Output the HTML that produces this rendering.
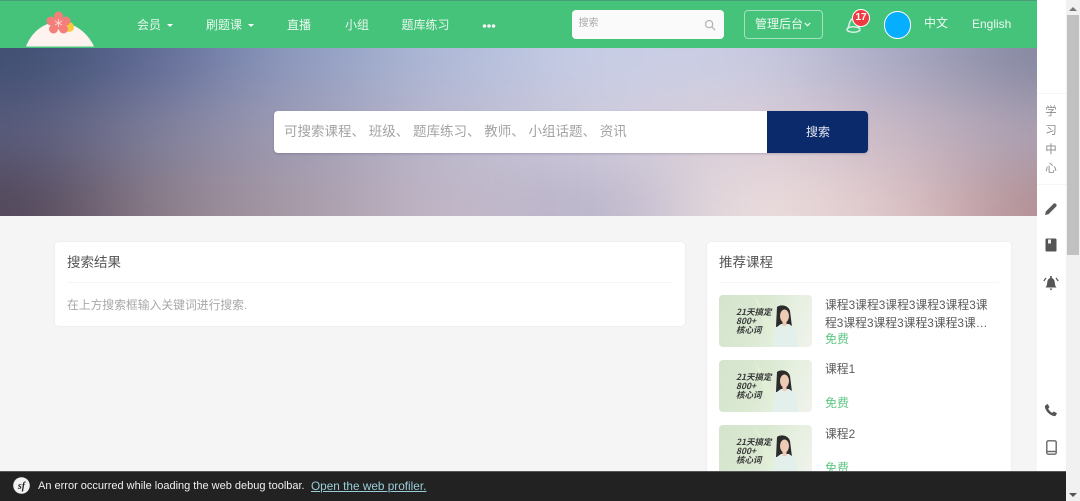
<!DOCTYPE html>
<html lang="zh">
<head>
<meta charset="utf-8">
<title>搜索</title>
<style>
*{box-sizing:border-box;margin:0;padding:0}
html,body{width:1080px;height:501px;overflow:hidden;background:#f5f5f5;font-family:"Liberation Sans","Noto Sans CJK SC",sans-serif}
.a{position:absolute;white-space:nowrap}
#nav{left:0;top:0;width:1037px;height:48px;background:#46c37b;border-top:1px solid #4a9d78}
.n{top:16px;font-size:12px;line-height:18px;color:#e8f7ee}
.caret{display:inline-block;width:0;height:0;border-left:3px solid transparent;border-right:3px solid transparent;border-top:3.500px solid #fff;margin-left:6px;vertical-align:2px}
#hero{left:0;top:48px;width:1037px;height:168px;overflow:hidden;background:#a8a8c4}
.card{background:#fff;border-radius:4px;box-shadow:0 0 2px rgba(0,0,0,.06)}
.t{font-size:13.500px;line-height:20px;color:#555}
.thumb{left:719px;width:93px;height:52px;border-radius:4px;overflow:hidden;background:linear-gradient(115deg,#d4e4cd 0,#dbe9d2 45%,#e6efe0 68%,#f0f3ec 100%)}
.thumb text{font-family:"Noto Sans CJK SC",sans-serif;font-size:8.500px;font-weight:700;font-style:italic;fill:#3a3a3a}
.price{left:825px;font-size:12px;line-height:18px;color:#5fc784}
.ct{left:825px;font-size:11.800px;line-height:18px;color:#5a5a5a}
</style>
</head>
<body>

<div class="a" id="nav"></div>

<!-- logo -->
<svg class="a" style="left:20px;top:8px" width="80" height="40" viewBox="0 0 80 40">
<path d="M6 38.500C11 25 23 14 39 14C54 14 68 25 74 38.500Z" fill="#fff3f0"/>
<circle cx="49" cy="19" r="5" fill="#f6c93e"/>
<g fill="#f47f7a">
<circle cx="38.500" cy="8" r="4.500"/><circle cx="46" cy="13" r="4.500"/><circle cx="43.500" cy="21" r="4.500"/><circle cx="33.500" cy="21" r="4.500"/><circle cx="31" cy="13" r="4.500"/><circle cx="38.500" cy="15" r="6.500"/>
</g>
<g stroke="#ffd9d4" stroke-width=".9"><path d="M38.500 11V19M35 13L42 17M42 13L35 17"/></g>
</svg>

<div class="a n" style="left:137px">会员<span class="caret"></span></div>
<div class="a n" style="left:206px">刷题课<span class="caret"></span></div>
<div class="a n" style="left:287px">直播</div>
<div class="a n" style="left:345px">小组</div>
<div class="a n" style="left:401.500px">题库练习</div>
<svg class="a" style="left:482px;top:23px" width="14" height="6"><circle cx="2.500" cy="3" r="1.800" fill="#f2f2f2"/><circle cx="7" cy="3" r="1.800" fill="#f2f2f2"/><circle cx="11.500" cy="3" r="1.800" fill="#f2f2f2"/></svg>

<div class="a" style="left:572px;top:10px;width:152px;height:29px;background:#fafafa;border-radius:4px"></div>
<div class="a" style="left:578.500px;top:16px;font-size:10px;line-height:16px;color:#aaa">搜索</div>
<svg class="a" style="left:704px;top:19px" width="12" height="12" viewBox="0 0 14 14" fill="none" stroke="#b5b5b5" stroke-width="1.500"><circle cx="6" cy="6" r="4.200"/><path d="M9 9L13 13"/></svg>

<div class="a" style="left:744px;top:10px;width:79px;height:29px;border:1px solid #a6e2bf;border-radius:4px"></div>
<div class="a" style="left:755px;top:15px;font-size:12px;line-height:18px;color:#eef9f2">管理后台</div>
<svg class="a" style="left:804px;top:22px" width="7" height="5" viewBox="0 0 9 6" fill="none" stroke="#eef9f2" stroke-width="1.500"><path d="M1 1L4.500 4.500L8 1"/></svg>

<!-- bell -->
<svg class="a" style="left:844px;top:15px" width="20" height="20" viewBox="0 0 20 20" fill="none" stroke="#d9f2e3" stroke-width="1.500"><path d="M4 13C5.500 10 5 6 8 4C11 3 13 5 14 8L15 13"/><ellipse cx="9.500" cy="14.500" rx="6.500" ry="2.800"/></svg>
<div class="a" style="left:852px;top:9px;width:18px;height:18px;border-radius:50%;background:#ee3a42;border:1.500px solid #fff;color:#fff;font-size:10px;font-weight:bold;line-height:15px;text-align:center">17</div>

<div class="a" style="left:883.500px;top:11px;width:27.500px;height:27.500px;border-radius:50%;background:#05aeff;border:1.500px solid #fff"></div>
<div class="a n" style="left:924px;top:14px;color:#eef9f2">中文</div>
<div class="a" style="left:972px;top:15px;font-size:12px;line-height:18px;color:#eef9f2">English</div>

<div class="a" id="hero">
<svg width="1037" height="168" viewBox="0 0 1037 168" style="display:block">
<defs><filter id="b" filterUnits="userSpaceOnUse" x="-400" y="-300" width="1900" height="800" color-interpolation-filters="sRGB"><feGaussianBlur stdDeviation="58 26"/></filter></defs>
<g filter="url(#b)" shape-rendering="crispEdges">
<rect x="-300" y="-150" width="395" height="197" fill="#3f4f72"/><rect x="95" y="-150" width="130" height="197" fill="#626c98"/><rect x="225" y="-150" width="150" height="197" fill="#8f9cc0"/><rect x="375" y="-150" width="150" height="197" fill="#b0bbd9"/><rect x="525" y="-150" width="150" height="197" fill="#c8cee6"/><rect x="675" y="-150" width="150" height="197" fill="#cacce2"/><rect x="825" y="-150" width="140" height="197" fill="#a9a9c4"/><rect x="965" y="-150" width="400" height="197" fill="#84869f"/>
<rect x="-300" y="47" width="395" height="73" fill="#585a7a"/><rect x="95" y="47" width="130" height="73" fill="#80809c"/><rect x="225" y="47" width="150" height="73" fill="#a09db5"/><rect x="375" y="47" width="150" height="73" fill="#bdb9cf"/><rect x="525" y="47" width="150" height="73" fill="#cfcbdc"/><rect x="675" y="47" width="150" height="73" fill="#dccfd8"/><rect x="825" y="47" width="140" height="73" fill="#c9b8c4"/><rect x="965" y="47" width="400" height="73" fill="#a89db0"/>
<rect x="-300" y="120" width="395" height="220" fill="#52475a"/><rect x="95" y="120" width="130" height="220" fill="#8d7e8a"/><rect x="225" y="120" width="150" height="220" fill="#a89ba8"/><rect x="375" y="120" width="150" height="220" fill="#c2b8c8"/><rect x="525" y="120" width="150" height="220" fill="#bab5cc"/><rect x="675" y="120" width="150" height="220" fill="#ecdfdf"/><rect x="825" y="120" width="140" height="220" fill="#dec6c9"/><rect x="965" y="120" width="400" height="220" fill="#b08c92"/>
</g>
</svg>
</div>

<!-- hero search -->
<div class="a" style="left:274px;top:111px;width:594px;height:42px;background:#fff;border-radius:4px;overflow:hidden;box-shadow:0 1px 2px rgba(60,50,80,.25)">
<div class="a" style="left:493px;top:0;width:101px;height:42px;background:#0a2a6b"></div>
</div>
<div class="a" style="left:284px;top:122px;font-size:13.500px;line-height:20px;color:#a3a3a3">可搜索课程、 班级、 题库练习、 教师、 小组话题、 资讯</div>
<div class="a" style="left:806px;top:122px;font-size:12px;line-height:20px;color:#e4e8f2">搜索</div>

<!-- result card -->
<div class="a card" style="left:55px;top:242px;width:630px;height:84px"></div>
<div class="a t" style="left:67px;top:253px">搜索结果</div>
<div class="a" style="left:67px;top:282px;width:606px;height:1px;background:#f5f5f5"></div>
<div class="a" style="left:67px;top:296px;font-size:11.800px;line-height:18px;color:#a8a8a8">在上方搜索框输入关键词进行搜索.</div>

<!-- recommend card -->
<div class="a card" style="left:707px;top:242px;width:304px;height:240px"></div>
<div class="a t" style="left:719px;top:253px">推荐课程</div>
<div class="a" style="left:719px;top:282px;width:280px;height:1px;background:#f5f5f5"></div>

<div class="a thumb" style="top:295px"><svg width="93" height="52" viewBox="0 0 93 52"><path d="M35 0L68 52H52Z" fill="#e2f1d4" opacity=".7"/><text x="17" y="20">21天搞定</text><text x="17" y="29">800+</text><text x="17" y="38">核心词</text><path d="M58 12C62 9 69 10 71 16L73 32H57Z" fill="#2b2b2b"/><path d="M53 52L55 34L62 29H70L77 34L79 52Z" fill="#e3efea"/><ellipse cx="65.500" cy="21" rx="4.500" ry="6.500" fill="#eec9b3"/><rect x="63.500" y="25" width="4" height="6" fill="#eec9b3"/></svg></div>
<div class="a ct" style="top:296px">课程3课程3课程3课程3课程3课</div>
<div class="a ct" style="top:314px">程3课程3课程3课程3课程3课…</div>
<div class="a price" style="top:330px">免费</div>

<div class="a thumb" style="top:360px"><svg width="93" height="52" viewBox="0 0 93 52"><path d="M35 0L68 52H52Z" fill="#e2f1d4" opacity=".7"/><text x="17" y="20">21天搞定</text><text x="17" y="29">800+</text><text x="17" y="38">核心词</text><path d="M58 12C62 9 69 10 71 16L73 32H57Z" fill="#2b2b2b"/><path d="M53 52L55 34L62 29H70L77 34L79 52Z" fill="#e3efea"/><ellipse cx="65.500" cy="21" rx="4.500" ry="6.500" fill="#eec9b3"/><rect x="63.500" y="25" width="4" height="6" fill="#eec9b3"/></svg></div>
<div class="a ct" style="top:360px">课程1</div>
<div class="a price" style="top:394px">免费</div>

<div class="a thumb" style="top:425px"><svg width="93" height="52" viewBox="0 0 93 52"><path d="M35 0L68 52H52Z" fill="#e2f1d4" opacity=".7"/><text x="17" y="20">21天搞定</text><text x="17" y="29">800+</text><text x="17" y="38">核心词</text><path d="M58 12C62 9 69 10 71 16L73 32H57Z" fill="#2b2b2b"/><path d="M53 52L55 34L62 29H70L77 34L79 52Z" fill="#e3efea"/><ellipse cx="65.500" cy="21" rx="4.500" ry="6.500" fill="#eec9b3"/><rect x="63.500" y="25" width="4" height="6" fill="#eec9b3"/></svg></div>
<div class="a ct" style="top:425px">课程2</div>
<div class="a price" style="top:459px">免费</div>

<!-- side bar -->
<div class="a" style="left:1037px;top:0;width:29px;height:471px;background:#fff"></div>
<div class="a" style="left:1037px;top:93px;width:29px;height:1px;background:#f5f5f5"></div>
<div class="a" style="left:1037px;top:184px;width:29px;height:1px;background:#f5f5f5"></div>
<div class="a" style="left:1044px;top:103px;width:14px;font-size:11.500px;line-height:19px;color:#8a8a8a;white-space:normal;text-align:center">学<br>习<br>中<br>心</div>
<svg class="a" style="left:1044px;top:202px" width="14" height="14" viewBox="0 0 14 14"><path d="M1 13L1.800 9.500L9.500 1.800C10.200 1.100 11 1.100 11.700 1.800L12.200 2.300C12.900 3 12.900 3.800 12.200 4.500L4.500 12.200Z" fill="#5a5a5a"/></svg>
<svg class="a" style="left:1045px;top:238px" width="12" height="14" viewBox="0 0 12 14"><path d="M1.500 .5H10.500C11 .5 11.500 1 11.500 1.500V12.500C11.500 13 11 13.500 10.500 13.500H1.500C1 13.500 .5 13 .5 12.500V1.500C.5 1 1 .5 1.500 .5Z" fill="#555"/><rect x="3" y="1.500" width="3" height="4" fill="#eee"/></svg>
<svg class="a" style="left:1043px;top:275px" width="16" height="16" viewBox="0 0 16 16" fill="#555"><path d="M2.500 12.500C4 11 4 9 4.300 7C4.600 4.500 6 3 8 3C10 3 11.400 4.500 11.700 7C12 9 12 11 13.500 12.500Z"/><path d="M6.500 13.500H9.500L8 15.500Z"/><rect x="7.200" y="1" width="1.600" height="2.500"/><path d="M.8 6L3 3M15.200 6L13 3" stroke="#555" stroke-width="1.200" fill="none"/></svg>
<svg class="a" style="left:1044px;top:403px" width="14" height="14" viewBox="0 0 14 14"><path d="M1.500 2.200L3.800 1L5.500 4.200L4.200 5.500C4.800 7.200 6.600 9.100 8.500 9.800L9.800 8.500L13 10.200L11.800 12.500C11.200 13.300 10 13.300 8.800 12.800C5.300 11.500 2.500 8.700 1.200 5.200C.7 4 .8 3 1.500 2.200Z" fill="#555"/></svg>
<svg class="a" style="left:1046px;top:440px" width="11" height="15" viewBox="0 0 11 15"><rect x=".8" y=".8" width="9.400" height="13.400" rx="1.500" fill="none" stroke="#666" stroke-width="1.400"/><path d="M.8 11.500H10.200" stroke="#666" stroke-width="1.400"/></svg>

<!-- scrollbar -->
<div class="a" style="left:1066px;top:0;width:14px;height:501px;background:#f1f1f1"></div>
<div class="a" style="left:1067px;top:15px;width:12px;height:240px;background:#c1c1c1"></div>
<div class="a" style="left:1069px;top:7px;width:0;height:0;border-left:4px solid transparent;border-right:4px solid transparent;border-bottom:4px solid #777"></div>
<div class="a" style="left:1069px;top:493px;width:0;height:0;border-left:4px solid transparent;border-right:4px solid transparent;border-top:4px solid #555"></div>

<!-- debug toolbar -->
<div class="a" style="left:0;top:471px;width:1066px;height:30px;background:#222;border-top:1px solid #555"></div>
<svg class="a" style="left:13px;top:477px" width="17" height="17" viewBox="0 0 17 17"><circle cx="8.500" cy="8.500" r="8.300" fill="#f2f2f2"/><text x="8.500" y="12" text-anchor="middle" font-size="10" font-style="italic" font-weight="bold" font-family="Liberation Serif,serif" fill="#222">sf</text></svg>
<div class="a" style="left:38px;top:479px;font-size:11px;line-height:15px;color:#f0f0f0">An error occurred while loading the web debug toolbar.</div>
<div class="a" style="left:311px;top:479px;font-size:11.800px;line-height:15px;color:#99cdd8;text-decoration:underline">Open the web profiler.</div>

</body>
</html>
